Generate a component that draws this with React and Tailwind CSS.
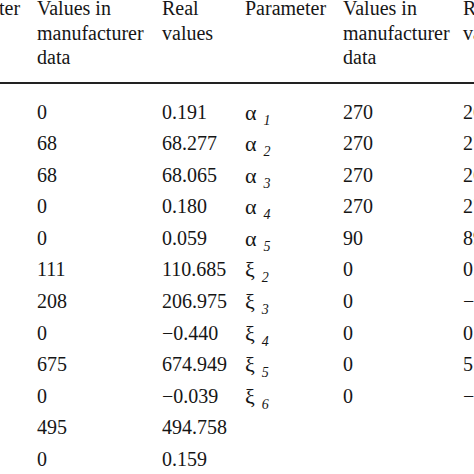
import React from "react";

const rows = [
  { a: "0", b: "0.191", p: ["α", "1"], c: "270", d: "269.830" },
  { a: "68", b: "68.277", p: ["α", "2"], c: "270", d: "270.014" },
  { a: "68", b: "68.065", p: ["α", "3"], c: "270", d: "269.902" },
  { a: "0", b: "0.180", p: ["α", "4"], c: "270", d: "270.109" },
  { a: "0", b: "0.059", p: ["α", "5"], c: "90", d: "89.962" },
  { a: "111", b: "110.685", p: ["ξ", "2"], c: "0", d: "0.076" },
  { a: "208", b: "206.975", p: ["ξ", "3"], c: "0", d: "−0.105" },
  { a: "0", b: "−0.440", p: ["ξ", "4"], c: "0", d: "0.221" },
  { a: "675", b: "674.949", p: ["ξ", "5"], c: "0", d: "5.012" },
  { a: "0", b: "−0.039", p: ["ξ", "6"], c: "0", d: "−0.043" },
  { a: "495", b: "494.758", p: null, c: "", d: "" },
  { a: "0", b: "0.159", p: null, c: "", d: "" },
];

function Param({ p }) {
  if (!p) return null;
  return (
    <span>
      <span className="text-[22px]">{p[0]}</span>
      <span className="italic text-[14px] relative top-[5px] ml-[7px]">{p[1]}</span>
    </span>
  );
}

export default function App() {
  return (
    <div
      className="w-[474px] h-[474px] overflow-hidden bg-white text-[#161616] text-[20px] font-['Liberation_Serif','Times_New_Roman',serif]"
      style={{ fontFamily: '"Liberation Serif", "Times New Roman", serif' }}
    >
      <div className="ml-[-61px] w-[700px] mt-[-4px]">
        <div className="flex leading-[24.5px]">
          <div className="w-[98px]">Parameter</div>
          <div className="w-[125px]">
            Values in
            <br />
            manufacturer
            <br />
            data
          </div>
          <div className="w-[83px]">
            Real
            <br />
            values
          </div>
          <div className="w-[98px]">Parameter</div>
          <div className="w-[120px]">
            Values in
            <br />
            manufacturer
            <br />
            data
          </div>
          <div className="w-[120px]">
            Real
            <br />
            values
          </div>
        </div>
        <div className="mt-[12px] h-[2px] bg-[#222]" />
        <div className="mt-[13px]">
          {rows.map((r, i) => (
            <div key={i} className="flex h-[31.6px] leading-[31.6px]">
              <div className="w-[98px]" />
              <div className="w-[125px]">{r.a}</div>
              <div className="w-[83px]">{r.b}</div>
              <div className="w-[98px]">
                <Param p={r.p} />
              </div>
              <div className="w-[120px]">{r.c}</div>
              <div className="w-[120px]">{r.d}</div>
            </div>
          ))}
        </div>
      </div>
    </div>
  );
}
